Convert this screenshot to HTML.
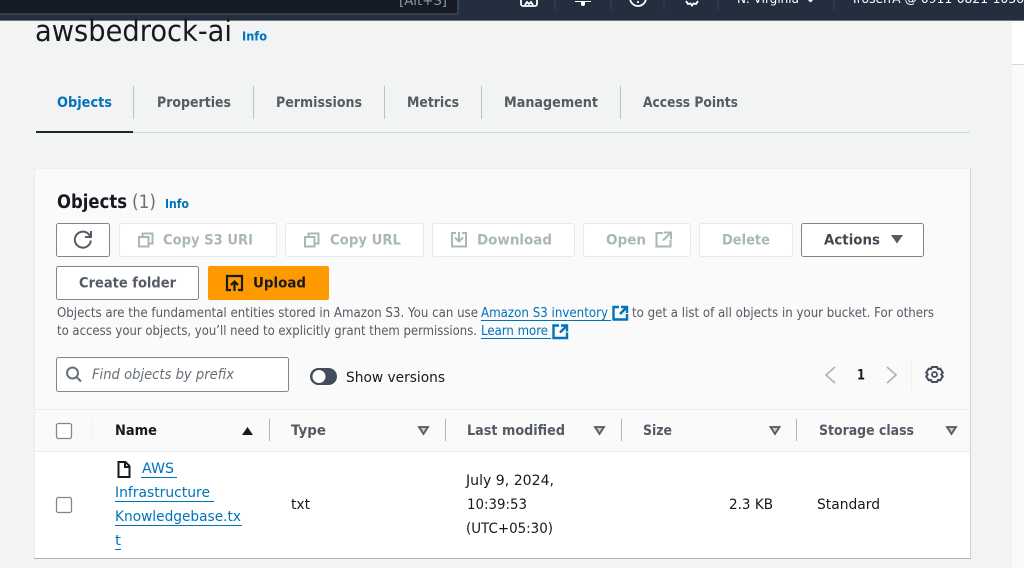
<!DOCTYPE html>
<html><head><meta charset="utf-8"><title>awsbedrock-ai</title>
<style>
html,body{margin:0;padding:0;width:1024px;height:568px;overflow:hidden;background:#f2f3f3}
svg{display:block}
text{font-family:"DejaVu Sans","Liberation Sans",sans-serif;font-size:14.2px;fill:#414750}
.b{font-weight:bold;font-size:14.6px}
.tab{fill:#545b64}
.dis{fill:#aab7b8}
.lnk{fill:#0073bb}
.hd{fill:#545b64}
.body{fill:#16191f}
.d{font-size:13.200px;fill:#545b64}
</style></head><body>
<svg width="1024" height="568" viewBox="0 0 1024 568" xmlns="http://www.w3.org/2000/svg">
<rect width="1024" height="568" fill="#f2f3f3"/>
<rect x="1012" y="20" width="12" height="548" fill="#fafafa"/>
<rect x="1012" y="20" width="12" height="44" fill="#fff"/>
<rect x="1012" y="64" width="12" height="1" fill="#d5dbdb"/>

<!-- top bar -->
<rect width="1024" height="20" fill="#232f3e"/>
<rect y="20" width="1024" height="1" fill="#6b7480"/>
<rect x="-5" y="-5" width="463" height="19" rx="2" fill="#161b25" stroke="#545b64"/>
<text x="399" y="5" style="font-size:13px;fill:#8d99a8" textLength="48" lengthAdjust="spacingAndGlyphs">[Alt+S]</text>
<g fill="none" stroke="#fff" stroke-width="1.800">
<rect x="521" y="-6" width="16" height="12" rx="2"/>
<path d="M525 5l2-3 2 2 2-2 2 3"/>
<circle cx="638" cy="-2" r="8"/><path d="M638 1v2"/>
<path d="M686 1l2 3 2.500-.5 1.500 2 1.500-2 2.500.5 2-3"/>
</g>
<path d="M575 1h16v1h-16zM581 1h4v3a2 2 0 1 1-4 0z" fill="#fff"/>
<g stroke="#3a4655"><path d="M555 0v10M611 0v10M664 0v10M718 0v10M834 0v10"/></g>
<text x="737" y="3" style="font-size:12.500px;fill:#fff" textLength="62" lengthAdjust="spacingAndGlyphs">N. Virginia</text>
<path d="M808 0l2.500 2.500 2.500-2.500z" fill="#fff"/>
<text x="851" y="3" style="font-size:12.500px;fill:#fff" textLength="173" lengthAdjust="spacingAndGlyphs">Trosen&#8202;A @ 0911-0821-1036</text>

<!-- title -->
<text x="35" y="41" style="font-size:29px;fill:#16191f" textLength="197" lengthAdjust="spacingAndGlyphs">awsbedrock-ai</text>
<text x="242" y="40.500" class="b lnk" style="font-size:12.600px" textLength="25" lengthAdjust="spacingAndGlyphs">Info</text>

<!-- tabs -->
<text x="57" y="107" class="b lnk" textLength="55" lengthAdjust="spacingAndGlyphs">Objects</text>
<text x="157" y="107" class="b tab" textLength="74" lengthAdjust="spacingAndGlyphs">Properties</text>
<text x="276" y="107" class="b tab" textLength="86" lengthAdjust="spacingAndGlyphs">Permissions</text>
<text x="407" y="107" class="b tab" textLength="52" lengthAdjust="spacingAndGlyphs">Metrics</text>
<text x="504" y="107" class="b tab" textLength="94" lengthAdjust="spacingAndGlyphs">Management</text>
<text x="643" y="107" class="b tab" textLength="95" lengthAdjust="spacingAndGlyphs">Access Points</text>
<g fill="#b9c4c6">
<rect x="133" y="86" width="1" height="33"/><rect x="253" y="86" width="1" height="33"/><rect x="384" y="86" width="1" height="33"/><rect x="481" y="86" width="1" height="33"/><rect x="620" y="86" width="1" height="33"/>
</g>
<rect x="36" y="132" width="934" height="1" fill="#cfd8da"/>
<rect x="36" y="131" width="97" height="2" fill="#1e2630"/>

<!-- card -->
<rect x="34" y="168" width="937" height="390" fill="#fafafa"/>
<rect x="34" y="168" width="937" height="1" fill="#f0f1f1"/>
<rect x="34" y="168" width="1" height="390" fill="#eceeee"/>
<rect x="970" y="168" width="1" height="390" fill="#ccd2d2"/>
<rect x="35" y="452" width="935" height="106" fill="#fff"/>
<rect x="34" y="558" width="937" height="1" fill="#a9b4b5"/>

<text x="57" y="208" class="b" style="font-size:18.500px;fill:#16191f" textLength="70" lengthAdjust="spacingAndGlyphs">Objects</text>
<text x="132" y="208" style="font-size:18.500px;fill:#687078" textLength="24" lengthAdjust="spacingAndGlyphs">(1)</text>
<text x="165" y="208" class="b lnk" style="font-size:12.600px" textLength="24" lengthAdjust="spacingAndGlyphs">Info</text>

<!-- buttons row 1 -->
<g fill="#fff" stroke="#e6eaea">
<rect x="119.500" y="223.500" width="157" height="33" rx="2"/>
<rect x="285.500" y="223.500" width="138" height="33" rx="2"/>
<rect x="432.500" y="223.500" width="142" height="33" rx="2"/>
<rect x="583.500" y="223.500" width="107" height="33" rx="2"/>
<rect x="699.500" y="223.500" width="93" height="33" rx="2"/>
</g>
<g fill="#fff" stroke="#7c8791">
<rect x="56.500" y="223.500" width="53" height="33" rx="2"/>
<rect x="801.500" y="223.500" width="122" height="33" rx="2"/>
<rect x="56.500" y="266.500" width="142" height="33" rx="2"/>
</g>
<rect x="208" y="266" width="121" height="34" rx="2" fill="#f90"/>
<path d="M90.800 240.500a8 8 0 1 1-2.300-6.500l2 2" fill="none" stroke="#545b64" stroke-width="2"/>
<path d="M91 231v6h-6" fill="none" stroke="#545b64" stroke-width="2"/>
<g fill="none" stroke="#aab7b8" stroke-width="2">
<rect x="139" y="237" width="9.500" height="9.500"/><path d="M142.500 236.500v-3h10v10h-3.500"/>
<rect x="305" y="237" width="9.500" height="9.500"/><path d="M308.500 236.500v-3h10v10h-3.500"/>
<path d="M456 233h-4v13.500h14v-13.500h-4M459 232v9M455 237.500l4 4 4-4"/>
<path d="M663 233h-6.500v13.500h14v-6.500M664 232.500h7v7M671 232.500l-8 8"/>
</g>
<text x="163" y="244.500" class="b dis" textLength="90" lengthAdjust="spacingAndGlyphs">Copy S3 URI</text>
<text x="330" y="244.500" class="b dis" textLength="71" lengthAdjust="spacingAndGlyphs">Copy URL</text>
<text x="477" y="244.500" class="b dis" textLength="75" lengthAdjust="spacingAndGlyphs">Download</text>
<text x="606" y="244.500" class="b dis" textLength="40" lengthAdjust="spacingAndGlyphs">Open</text>
<text x="722" y="244.500" class="b dis" textLength="48" lengthAdjust="spacingAndGlyphs">Delete</text>
<text x="824" y="244.500" class="b" style="fill:#414750" textLength="56" lengthAdjust="spacingAndGlyphs">Actions</text>
<path d="M891 235h12l-6 8.500z" fill="#545b64"/>
<text x="79" y="287.500" class="b" style="fill:#545b64" textLength="97" lengthAdjust="spacingAndGlyphs">Create folder</text>
<g fill="none" stroke="#16191f" stroke-width="2.200">
<path d="M231 290h-4v-14h15v14h-4M234.500 291v-9.500M231 285l3.500-3.500 3.500 3.500"/>
</g>
<text x="253" y="287.500" class="b" style="fill:#16191f" textLength="53" lengthAdjust="spacingAndGlyphs">Upload</text>

<!-- description -->
<text x="57" y="317" class="d" textLength="421" lengthAdjust="spacingAndGlyphs">Objects are the fundamental entities stored in Amazon S3. You can use</text>
<text x="481" y="317" class="d lnk" style="fill:#0073bb" textLength="127" lengthAdjust="spacingAndGlyphs">Amazon S3 inventory</text>
<rect x="481" y="320" width="130" height="1" fill="#0073bb"/>
<g fill="none" stroke="#0073bb" stroke-width="2.400">
<path d="M619 307h-5.500v12.500h13.500v-5.500M621 307h6v6M627 307l-7 7"/>
<path d="M559 325.500h-5.500v12.500h13.500v-5.500M561 325.500h6v6M567 325.500l-7 7"/>
</g>
<text x="632" y="317" class="d" textLength="302" lengthAdjust="spacingAndGlyphs">to get a list of all objects in your bucket. For others</text>
<text x="57" y="335" class="d" textLength="420" lengthAdjust="spacingAndGlyphs">to access your objects, you’ll need to explicitly grant them permissions.</text>
<text x="481" y="335" class="d" style="fill:#0073bb" textLength="67" lengthAdjust="spacingAndGlyphs">Learn more</text>
<rect x="481" y="338" width="70" height="1" fill="#0073bb"/>

<!-- search -->
<rect x="56.500" y="357.500" width="232" height="34" rx="2" fill="#fff" stroke="#7c8791"/>
<circle cx="72.500" cy="373" r="5.500" fill="none" stroke="#687078" stroke-width="2"/>
<path d="M76.500 377l4.500 4.500" stroke="#687078" stroke-width="2"/>
<text x="92" y="379" style="font-size:14.200px;font-style:italic;fill:#687078" textLength="142" lengthAdjust="spacingAndGlyphs">Find objects by prefix</text>
<rect x="310" y="368" width="27" height="17" rx="8.500" fill="#414d5c"/>
<circle cx="319" cy="376.500" r="6.500" fill="#fff"/>
<text x="346" y="382" style="fill:#16191f" textLength="99" lengthAdjust="spacingAndGlyphs">Show versions</text>

<!-- pagination -->
<path d="M835 367l-9 8 9 8M887 367l9 8-9 8" fill="none" stroke="#aab7b8" stroke-width="1.700"/>
<text x="857" y="379.500" class="b" style="fill:#16191f;font-size:14px" textLength="8" lengthAdjust="spacingAndGlyphs">1</text>
<rect x="911" y="358" width="1" height="33" fill="#f0f1f1"/>
<path d="M932 367h5l1 2 2.300-.3 2.500 4-1.500 1.800 1.500 1.800-2.500 4-2.300-.3-1 2h-5l-1-2-2.300.3-2.500-4 1.500-1.800-1.500-1.800 2.500-4 2.300.3z" fill="none" stroke="#414d5c" stroke-width="2"/>
<circle cx="934.500" cy="374.500" r="2.500" fill="none" stroke="#414d5c" stroke-width="1.800"/>

<!-- table header -->
<rect x="35" y="409" width="935" height="1" fill="#eaeded"/>
<rect x="35" y="451" width="935" height="1" fill="#eaeded"/>
<rect x="56.500" y="423.500" width="15" height="15" rx="2" fill="#fff" stroke="#7c8791" stroke-width="1.300"/>
<rect x="92" y="420" width="1" height="21" fill="#f0f1f1"/>
<text x="115" y="435" class="b" style="fill:#16191f" textLength="42" lengthAdjust="spacingAndGlyphs">Name</text>
<path d="M242 435l5.500-8 5.500 8z" fill="#16191f"/>
<g fill="#aab7b8">
<rect x="269" y="419" width="1" height="22"/><rect x="445" y="419" width="1" height="22"/><rect x="621" y="419" width="1" height="22"/><rect x="796" y="419" width="1" height="22"/>
</g>
<text x="291" y="435" class="b hd" textLength="35" lengthAdjust="spacingAndGlyphs">Type</text>
<text x="467" y="435" class="b hd" textLength="98" lengthAdjust="spacingAndGlyphs">Last modified</text>
<text x="643" y="435" class="b hd" textLength="29" lengthAdjust="spacingAndGlyphs">Size</text>
<text x="819" y="435" class="b hd" textLength="95" lengthAdjust="spacingAndGlyphs">Storage class</text>
<g fill="#c3cacb" stroke="#545b64" stroke-width="1.800">
<path d="M419 427h9l-4.500 7zM595 427h9l-4.500 7zM770.500 427h9l-4.500 7zM947 427h9l-4.500 7z"/>
</g>

<!-- row -->
<rect x="56.500" y="497.500" width="15" height="15" rx="2" fill="#fff" stroke="#7c8791" stroke-width="1.300"/>
<path d="M118.500 462h7l4 4v11h-11zM125 462v5h4.500" fill="none" stroke="#16191f" stroke-width="2"/>
<text x="142" y="473" class="lnk" textLength="32" lengthAdjust="spacingAndGlyphs">AWS</text>
<rect x="141" y="477" width="36" height="1" fill="#0073bb"/>
<text x="115" y="497" class="lnk" textLength="95" lengthAdjust="spacingAndGlyphs">Infrastructure</text>
<rect x="115" y="501" width="99" height="1" fill="#0073bb"/>
<text x="115" y="521" class="lnk" textLength="126" lengthAdjust="spacingAndGlyphs">Knowledgebase.tx</text>
<rect x="115" y="525" width="127" height="1" fill="#0073bb"/>
<text x="115" y="545" class="lnk" textLength="6" lengthAdjust="spacingAndGlyphs">t</text>
<rect x="115" y="549" width="6" height="1" fill="#0073bb"/>
<text x="291" y="509" class="body" textLength="19" lengthAdjust="spacingAndGlyphs">txt</text>
<text x="466" y="485" class="body" textLength="88" lengthAdjust="spacingAndGlyphs">July 9, 2024,</text>
<text x="467" y="509" class="body" textLength="60" lengthAdjust="spacingAndGlyphs">10:39:53</text>
<text x="466" y="533" class="body" textLength="87" lengthAdjust="spacingAndGlyphs">(UTC+05:30)</text>
<text x="729" y="509" class="body" textLength="44" lengthAdjust="spacingAndGlyphs">2.3 KB</text>
<text x="817" y="509" class="body" textLength="63" lengthAdjust="spacingAndGlyphs">Standard</text>
</svg>
</body></html>
